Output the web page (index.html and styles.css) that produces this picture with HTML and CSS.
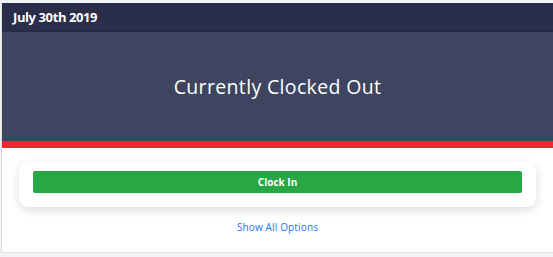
FILE: index.html
```html
<!DOCTYPE html>
<html>
<head>
<meta charset="utf-8">
<link rel="stylesheet" href="styles.css">
</head>
<body>
<div class="card">
  <div class="date-bar">July 30th 2019</div>
  <div class="status">Currently Clocked Out</div>
  <div class="red-band"></div>
  <div class="body">
    <div class="action-card">
      <button class="clock-btn">Clock In</button>
    </div>
    <a class="options" href="#">Show All Options</a>
  </div>
</div>
</body>
</html>
```
FILE: styles.css
```css
html, body {
  margin: 0;
  padding: 0;
  background: #f1f3f6;
  font-family: "Open Sans", "DejaVu Sans", sans-serif;
}
body {
  padding: 3px 0 0 1px;
}
.card {
  width: 552px;
  height: 250px;
  background: #fff;
  border: 1px solid #dfe1e4;
  border-top: none;
  border-right: none;
  box-sizing: border-box;
  display: flex;
  flex-direction: column;
}
.date-bar {
  height: 29px;
  background: #2a2e4a;
  color: #fff;
  font-weight: 700;
  font-size: 13px;
  line-height: 29px;
  padding-left: 11px;
  border-bottom: 1px solid #232740;
  box-sizing: border-box;
  letter-spacing: -0.4px;
}
.status {
  height: 109px;
  background: #3e4560;
  color: #fff;
  font-size: 19.5px;
  display: flex;
  align-items: center;
  justify-content: center;
  letter-spacing: 0.35px;
}
.red-band {
  height: 7px;
  background: #ef2830;
}
.body {
  flex: 1;
  display: flex;
  flex-direction: column;
  align-items: center;
  padding: 14px 17px 0 17px;
}
.action-card {
  align-self: stretch;
  height: 45px;
  background: #fff;
  border-radius: 9px;
  box-shadow: 0 3px 10px rgba(0,0,0,0.14);
  display: flex;
  align-items: center;
  padding: 0 14px;
}
.clock-btn {
  flex: 1;
  height: 22px;
  border: none;
  border-radius: 2px;
  background: #28a745;
  color: #fff;
  font-family: inherit;
  font-weight: 700;
  font-size: 10px;
  padding: 0;
  margin-top: -5px;
}
.options {
  margin-top: 13px;
  color: #1877f2;
  font-size: 10px;
  letter-spacing: 0.15px;
  text-decoration: none;
}
```
